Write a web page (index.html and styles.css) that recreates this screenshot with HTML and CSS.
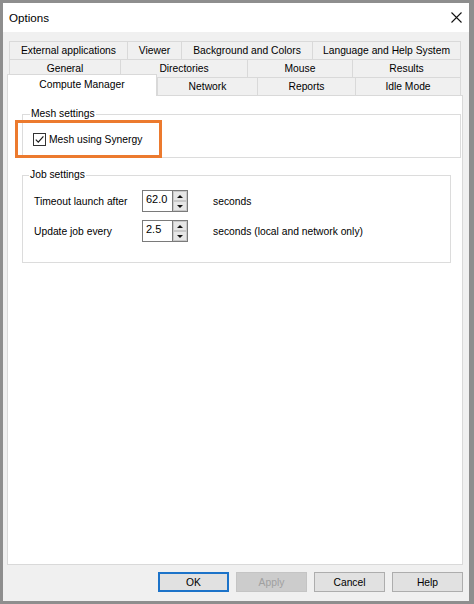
FILE: index.html
```html
<!DOCTYPE html>
<html>
<head>
<meta charset="utf-8">
<link rel="stylesheet" href="styles.css">
</head>
<body>
<div class="window">
  <div class="titlebar">
    <span class="title">Options</span>
    <svg class="close" width="11" height="11" viewBox="0 0 11 11"><path d="M0.5 0.5 L10.5 10.5 M10.5 0.5 L0.5 10.5" stroke="#111" stroke-width="1.1" fill="none"/></svg>
  </div>
  <div class="client">
    <div class="tabs">
      <div class="tabrow r1">
        <div class="tab">External applications</div>
        <div class="tab">Viewer</div>
        <div class="tab">Background and Colors</div>
        <div class="tab last">Language and Help System</div>
      </div>
      <div class="tabrow r2">
        <div class="tab">General</div>
        <div class="tab">Directories</div>
        <div class="tab">Mouse</div>
        <div class="tab last">Results</div>
      </div>
      <div class="tabrow r3">
        <div class="tab sel">Compute Manager</div>
        <div class="tab">Network</div>
        <div class="tab">Reports</div>
        <div class="tab last">Idle Mode</div>
      </div>
    </div>
    <div class="panel">
      <fieldset class="group mesh">
        <legend>Mesh settings</legend>
        <div class="check">
          <span class="box"><svg width="11" height="11" viewBox="0 0 11 11"><path d="M1.8 5.6 L4.3 8.2 L9.4 2.4" stroke="#1a1a1a" stroke-width="1.2" fill="none"/></svg></span>
          <span>Mesh using Synergy</span>
        </div>
      </fieldset>
      <fieldset class="group job">
        <legend>Job settings</legend>
        <div class="jobrow">
          <span class="lbl">Timeout launch after</span>
          <div class="spin"><span class="edit">62.0</span><span class="arrows"><span class="arrow up"></span><span class="arrow down"></span></span></div>
          <span class="unit">seconds</span>
        </div>
        <div class="jobrow">
          <span class="lbl">Update job every</span>
          <div class="spin"><span class="edit">2.5</span><span class="arrows"><span class="arrow up"></span><span class="arrow down"></span></span></div>
          <span class="unit">seconds (local and network only)</span>
        </div>
      </fieldset>
      <div class="highlight"></div>
    </div>
    <div class="buttons">
      <div class="btn default">OK</div>
      <div class="btn disabled">Apply</div>
      <div class="btn">Cancel</div>
      <div class="btn">Help</div>
    </div>
  </div>
</div>
</body>
</html>
```
FILE: styles.css
```css
html, body {
  margin: 0;
  padding: 0;
}
body {
  background: #8e8e8e;
  width: 474px;
  height: 604px;
  overflow: hidden;
  font-family: "Liberation Sans", Arial, sans-serif;
  font-size: 10.3px;
  color: #000;
}
.window {
  margin: 3px 5px 3px 3px;
  height: 598px;
  background: #f0f0f0;
  display: flex;
  flex-direction: column;
}
.titlebar {
  height: 29px;
  background: #fff;
  display: flex;
  align-items: center;
  justify-content: space-between;
  padding: 0 7px 0 6px;
  flex: none;
}
.title {
  font-size: 11.6px;
}
.close {
  display: block;
}
.client {
  padding: 9px 6px 0 4px;
  flex: 1;
  display: flex;
  flex-direction: column;
}
.tabs {
  margin: 0 2px;
}
.tabrow {
  display: grid;
  height: 18px;
}
.r1 { grid-template-columns: 118px 54px 131px 1fr; }
.r2 { grid-template-columns: 111px 127px 105px 1fr; }
.r3 { grid-template-columns: 148px 100px 98px 1fr; }
.tab {
  border-top: 1px solid #d9d9d9;
  border-left: 1px solid #d9d9d9;
  background: #f0f0f0;
  display: flex;
  align-items: center;
  justify-content: center;
  white-space: nowrap;
  box-sizing: border-box;
  height: 18px;
}
.tab.last {
  border-right: 1px solid #d9d9d9;
}
.tab.sel {
  background: #fff;
  height: 22px;
  margin: -3px 0 0 -2px;
  border-right: 1px solid #d9d9d9;
  padding-bottom: 3px;
  position: relative;
  z-index: 2;
}
.panel {
  position: relative;
  height: 470px;
  box-sizing: border-box;
  border: 1px solid #d9d9d9;
  background: #fff;
  padding: 11px 0 0 14px;
}
.group {
  margin: 0;
  border: 1px solid #dcdcdc;
  box-sizing: border-box;
  min-width: 0;
}
.group legend {
  padding: 0 1px;
  line-height: 14px;
  font-size: 10.3px;
}
.mesh {
  height: 51px;
  margin-right: 1px;
  padding: 0 0 0 7px;
}
.check {
  display: flex;
  align-items: center;
  margin: 12px 0 0 3px;
  gap: 3px;
}
.box {
  width: 13px;
  height: 13px;
  box-sizing: border-box;
  border: 1px solid #333;
  background: #fff;
  display: flex;
  align-items: center;
  justify-content: center;
}
.box svg { display: block; }
.job {
  height: 95px;
  margin: 10px 11px 0 0;
  padding: 0 0 0 6px;
}
.jobrow {
  display: grid;
  grid-template-columns: 108px 71px 1fr;
  align-items: center;
  height: 22px;
  margin: 8px 0 0 5px;
}
.spin {
  display: flex;
  height: 22px;
  width: 46px;
}
.edit {
  width: 30px;
  box-sizing: border-box;
  border: 1px solid #7a7a7a;
  border-right: none;
  background: #fff;
  padding: 2px 0 0 3px;
  font-size: 11px;
}
.arrows {
  width: 16px;
  box-sizing: border-box;
  border: 1px solid #7a7a7a;
  display: flex;
  flex-direction: column;
  background: #fff;
}
.arrow {
  flex: 1;
  background: #e6e6e6;
  border: 1px solid #c8c8c8;
  display: flex;
  align-items: center;
  justify-content: center;
}
.arrow::after {
  content: "";
  width: 0;
  height: 0;
  border-left: 3px solid transparent;
  border-right: 3px solid transparent;
}
.arrow.up::after {
  border-bottom: 3px solid #111;
}
.arrow.down::after {
  border-top: 3px solid #111;
}
.highlight {
  position: absolute;
  left: 7px;
  top: 24px;
  width: 147px;
  height: 38px;
  box-sizing: border-box;
  border: 3px solid #ec7a2e;
}
.buttons {
  display: flex;
  justify-content: flex-end;
  gap: 7px;
  margin-top: 7px;
}
.btn {
  width: 71px;
  height: 20px;
  box-sizing: border-box;
  background: #e1e1e1;
  border: 1px solid #adadad;
  display: flex;
  align-items: center;
  justify-content: center;
}
.btn.default {
  border: 2px solid #1c73c9;
}
.btn.disabled {
  background: #cccccc;
  border-color: #c4c4c4;
  color: #a0a0a0;
}
```
